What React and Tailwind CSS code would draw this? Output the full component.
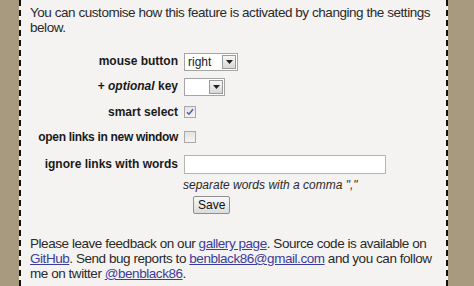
import React from 'react';

const Select = ({ value, width }) => (
    <div className={`flex h-[18px] ${width} items-center border border-[#a5a5a5] bg-white`}>
        <span className="flex-1 pl-[3px] text-[12px] leading-none text-[#222]">{value}</span>
        <span className="mr-[1px] flex h-[14px] w-[14px] items-center justify-center border border-[#9a9a9a] bg-gradient-to-b from-[#f6f6f6] to-[#d8d8d8]">
            <svg width="7" height="4" viewBox="0 0 7 4">
                <path d="M0 0h7L3.5 4z" fill="#222" />
            </svg>
        </span>
    </div>
);

const Checkbox = ({ checked }) => (
    <div className="flex h-[12px] w-[12px] items-center justify-center border border-[#a8a8a8] bg-gradient-to-b from-[#e4e4e4] to-[#f4f4f4]">
        {checked && (
            <svg width="8" height="8" viewBox="0 0 8 8">
                <path d="M1 4.2l2 2L7 1.2" stroke="#4b5aa8" strokeWidth="1.4" fill="none" />
            </svg>
        )}
    </div>
);

const Row = ({ label, h, tight, children }) => (
    <div className={`flex ${h} items-center`}>
        <div className={`flex w-[148px] justify-end whitespace-nowrap text-[12px] font-bold text-[#1a1a1a] ${tight ? 'tracking-[-0.32px]' : ''}`}>{label}</div>
        <div className="ml-[6px] flex items-center">{children}</div>
    </div>
);

const Link = ({ children }) => <a className="text-[#3c3c9c] underline">{children}</a>;

export default function App() {
    return (
        <div className="flex h-[286px] w-[474px] overflow-hidden bg-[#a89a7f]" style={{ fontFamily: '"Liberation Sans", Arial, sans-serif' }}>
            <div className="w-[19px]" />
            <div className="flex w-[429px] flex-col whitespace-nowrap border-x-2 border-dashed border-[#111] bg-[#f4f3f1] pl-[9px] pt-[5px] text-[13.5px] leading-[15px] tracking-[-0.45px] text-[#2a2a2a]">
                <p>
                    You can customise how this feature is activated by changing the settings
                    <br />
                    below.
                </p>

                <div className="mt-[14px] flex flex-col tracking-normal">
                    <Row label="mouse button" h="h-[25px]">
                        <Select value="right" width="w-[54px]" />
                    </Row>
                    <Row label={<span>+ <i>optional</i> key</span>} h="h-[25px]">
                        <Select value="" width="w-[41px]" />
                    </Row>
                    <Row label="smart select" h="h-[26px]">
                        <Checkbox checked />
                    </Row>
                    <Row label="open links in new window" h="h-[24px]" tight>
                        <Checkbox />
                    </Row>
                    <Row label="ignore links with words" h="h-[30px]">
                        <div className="h-[19px] w-[202px] border border-[#b5b5b5] bg-white" />
                    </Row>
                    <div className="ml-[153px] text-[12px] italic leading-[12px] text-[#2a2a2a]">separate words with a comma ","</div>
                    <div className="ml-[163px] mt-[5px]">
                        <button className="h-[18px] rounded-[2px] border border-[#8e8e8e] bg-gradient-to-b from-[#f8f8f8] to-[#dcdcdc] px-[4px] text-[12px] leading-none text-[#111]">Save</button>
                    </div>
                </div>

                <p className="mt-[22px]">
                    Please leave feedback on our <Link>gallery page</Link>. Source code is available on
                    <br />
                    <Link>GitHub</Link>. Send bug reports to <Link>benblack86@gmail.com</Link> and you can follow
                    <br />
                    me on twitter <Link>@benblack86</Link>.
                </p>
            </div>
        </div>
    );
}
